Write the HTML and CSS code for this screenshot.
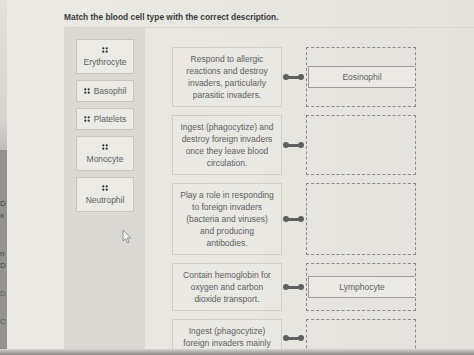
FILE: index.html
```html
<!DOCTYPE html>
<html lang="en">
<head>
    <meta charset="UTF-8">
    <meta name="viewport" content="width=device-width, initial-scale=1.0">
    <title>Match the blood cell type</title>
    <link rel="stylesheet" href="styles.css">
</head>
<body>
    <div class="screen">
        <div class="edge">
            <div class="edge-dark">
                <span>D</span>
                <span>x</span>
                <span class="gap">n</span>
                <span>D</span>
                <span class="gap2">D</span>
                <span class="gap2">C</span>
            </div>
        </div>

        <div class="page">
            <h1 class="title">Match the blood cell type with the correct description.</h1>

            <div class="board">
                <div class="bank">
                    <div class="chip stacked"><svg class="grip" viewBox="0 0 6 6"><circle cx="1.3" cy="1.3" r="1.1"/><circle cx="4.7" cy="1.3" r="1.1"/><circle cx="1.3" cy="4.7" r="1.1"/><circle cx="4.7" cy="4.7" r="1.1"/></svg>Erythrocyte</div>
                    <div class="chip"><svg class="grip" viewBox="0 0 6 6"><circle cx="1.3" cy="1.3" r="1.1"/><circle cx="4.7" cy="1.3" r="1.1"/><circle cx="1.3" cy="4.7" r="1.1"/><circle cx="4.7" cy="4.7" r="1.1"/></svg>Basophil</div>
                    <div class="chip"><svg class="grip" viewBox="0 0 6 6"><circle cx="1.3" cy="1.3" r="1.1"/><circle cx="4.7" cy="1.3" r="1.1"/><circle cx="1.3" cy="4.7" r="1.1"/><circle cx="4.7" cy="4.7" r="1.1"/></svg>Platelets</div>
                    <div class="chip stacked"><svg class="grip" viewBox="0 0 6 6"><circle cx="1.3" cy="1.3" r="1.1"/><circle cx="4.7" cy="1.3" r="1.1"/><circle cx="1.3" cy="4.7" r="1.1"/><circle cx="4.7" cy="4.7" r="1.1"/></svg>Monocyte</div>
                    <div class="chip stacked"><svg class="grip" viewBox="0 0 6 6"><circle cx="1.3" cy="1.3" r="1.1"/><circle cx="4.7" cy="1.3" r="1.1"/><circle cx="1.3" cy="4.7" r="1.1"/><circle cx="4.7" cy="4.7" r="1.1"/></svg>Neutrophil</div>
                    <svg class="cursor" width="10" height="15" viewBox="0 0 10 15">
                        <path d="M1 1 L1 12 L3.6 9.6 L5.6 14 L7.2 13.3 L5.3 9 L8.8 9 Z" fill="#f4f3ef" stroke="#8a8986" stroke-width="0.9" stroke-linejoin="round"/>
                    </svg>
                </div>

                <div class="matches">
                    <div class="row">
                        <div class="desc">Respond to allergic<br>reactions and destroy<br>invaders, particularly<br>parasitic invaders.</div>
                        <div class="link"><i></i><b></b><i></i></div>
                        <div class="target"><div class="placed">Eosinophil</div></div>
                    </div>
                    <div class="row">
                        <div class="desc">Ingest (phagocytize) and<br>destroy foreign invaders<br>once they leave blood<br>circulation.</div>
                        <div class="link"><i></i><b></b><i></i></div>
                        <div class="target"></div>
                    </div>
                    <div class="row">
                        <div class="desc">Play a role in responding<br>to foreign invaders<br>(bacteria and viruses)<br>and producing<br>antibodies.</div>
                        <div class="link"><i></i><b></b><i></i></div>
                        <div class="target"></div>
                    </div>
                    <div class="row">
                        <div class="desc">Contain hemoglobin for<br>oxygen and carbon<br>dioxide transport.</div>
                        <div class="link"><i></i><b></b><i></i></div>
                        <div class="target"><div class="placed">Lymphocyte</div></div>
                    </div>
                    <div class="row last">
                        <div class="desc">Ingest (phagocytize)<br>foreign invaders mainly</div>
                        <div class="link"><i></i><b></b><i></i></div>
                        <div class="target"></div>
                    </div>
                </div>
            </div>
        </div>
    </div>
    <div class="bezel"></div>
</body>
</html>
```

FILE: styles.css
```css
:root {
    --bg-color: #e7e5df;
    --panel-bg: #dad9d4;
    --card-bg: #ebeae5;
    --card-border: #c6c5c0;
    --text-color: #3b3b3b;
    --text-soft: #5e5e5c;
    --wire: #5f5f5f;
}

* {
    margin: 0;
    padding: 0;
    box-sizing: border-box;
}

body {
    width: 474px;
    height: 355px;
    overflow: hidden;
    font-family: 'Liberation Sans', Arial, sans-serif;
    background: linear-gradient(90deg, #eceae5 0%, #e8e6e0 50%, #e4e2dc 100%);
    color: var(--text-color);
}

.screen {
    display: flex;
    height: 349px;
    overflow: hidden;
}

.edge {
    width: 7px;
    display: flex;
    flex-direction: column;
    justify-content: flex-end;
    background: linear-gradient(180deg, #e2e0da 0%, #d6d4cf 35%, #bdbcb8 43%);
}

.edge-dark {
    height: 199px;
    background: #94938f;
    display: flex;
    flex-direction: column;
    padding-top: 48px;
    font-size: 8px;
    line-height: 12px;
    color: #3d3d3d;
}

.edge-dark span {
    display: block;
    width: 7px;
}

.edge-dark .gap {
    margin-top: 26px;
}

.edge-dark .gap2 {
    margin-top: 16px;
    color: #5a5a58;
}

.page {
    flex: 1;
    padding-left: 57px;
    display: flex;
    flex-direction: column;
    min-height: 0;
}

.title {
    flex-shrink: 0;
    font-size: 8.4px;
    font-weight: 700;
    color: var(--text-color);
    padding-top: 12px;
    height: 27px;
}

.board {
    flex: 1;
    min-height: 0;
    display: flex;
    border-top: 1px solid #d6d4ce;
}

.bank {
    position: relative;
    width: 81px;
    background: var(--panel-bg);
    padding: 11px 11px 0 12px;
    display: flex;
    flex-direction: column;
    gap: 6px;
}

.chip {
    background: var(--card-bg);
    border: 1px solid var(--card-border);
    color: var(--text-soft);
    font-size: 8.5px;
    line-height: 12px;
    height: 22px;
    flex-shrink: 0;
    display: flex;
    align-items: center;
    justify-content: center;
    gap: 4px;
}

.chip.stacked {
    height: 35px;
    flex-direction: column;
    gap: 3px;
    padding-top: 2px;
}

.grip {
    width: 6px;
    height: 6px;
    fill: #2e2e2e;
    flex-shrink: 0;
}

.cursor {
    position: absolute;
    left: 58px;
    top: 201px;
}

.matches {
    margin-left: 27px;
    padding-top: 19px;
    display: flex;
    flex-direction: column;
    gap: 8px;
}

.row {
    display: flex;
    align-items: stretch;
    flex-shrink: 0;
}

.desc {
    width: 110px;
    background: #eae8e3;
    border: 1px solid #cfcdc8;
    color: var(--text-soft);
    font-size: 8.5px;
    line-height: 12px;
    text-align: center;
    padding: 5px 3px;
}

.row.last .desc {
    padding-top: 5px;
    padding-bottom: 14px;
}

.link {
    width: 24px;
    display: flex;
    align-items: center;
    padding: 0 2px 0 1px;
}

.row.last .link {
    align-items: flex-start;
    padding-top: 16px;
}

.link i {
    width: 6px;
    height: 6px;
    border-radius: 50%;
    background: var(--wire);
    flex-shrink: 0;
}

.link b {
    flex: 1;
    height: 3px;
    margin: 1.5px -1px 0;
    background: var(--wire);
}

.target {
    width: 110px;
    border: 1px dashed #8c8b88;
    display: flex;
    align-items: center;
}

.placed {
    width: 100%;
    margin-left: 1px;
    height: 22px;
    background: #ebe9e4;
    border: 1px solid #9e9d99;
    border-right: none;
    color: var(--text-soft);
    font-size: 8.5px;
    display: flex;
    align-items: center;
    justify-content: center;
}

.bezel {
    height: 6px;
    background: linear-gradient(180deg, #d8d6d1 0%, #a6a5a1 60%, #8f8e8b 100%);
}
```
